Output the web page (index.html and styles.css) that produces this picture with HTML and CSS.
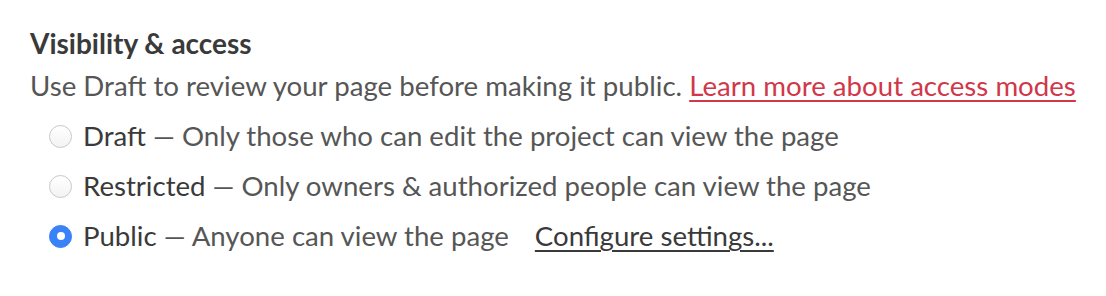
FILE: index.html
```html
<!DOCTYPE html>
<html>
<head>
<meta charset="utf-8">
<link rel="stylesheet" href="styles.css">
</head>
<body>
<section class="panel">
  <h2 class="title">Visibility &amp; access</h2>
  <p class="intro">Use Draft to review your page before making it public. <a class="link" href="#">Learn more about access modes</a></p>
  <ul class="options">
    <li class="option">
      <span class="radio"></span>
      <span class="label"><span class="name">Draft</span> — Only those who can edit the project can view the page</span>
    </li>
    <li class="option">
      <span class="radio"></span>
      <span class="label"><span class="name">Restricted</span> — Only owners &amp; authorized people can view the page</span>
    </li>
    <li class="option">
      <span class="radio checked"></span>
      <span class="label"><span class="name">Public</span> — Anyone can view the page</span>
      <a class="configure" href="#">Configure settings...</a>
    </li>
  </ul>
</section>
</body>
</html>
```

FILE: styles.css
```css
html, body {
  margin: 0;
  padding: 0;
  background: #ffffff;
}
body {
  font-family: Lato, "Open Sans", sans-serif;
  color: #555555;
}
.panel {
  padding: 26px 30px 0 30px;
}
.title {
  margin: 0;
  font-size: 28px;
  font-weight: 700;
  color: #3a3a3a;
  line-height: 34px;
}
.intro {
  margin: 9px 0 0 0;
  font-size: 27.65px;
  line-height: 34px;
  color: #565656;
}
.link {
  color: #d0384a;
  text-decoration: underline;
  text-underline-offset: 4px;
  text-decoration-thickness: 2px;
}
.options {
  list-style: none;
  margin: 16px 0 0 0;
  padding: 0 0 0 19px;
  display: flex;
  flex-direction: column;
  gap: 16px;
}
.option {
  display: flex;
  align-items: center;
  font-size: 27.6px;
  line-height: 34px;
  color: #565656;
}
.radio {
  width: 21px;
  height: 21px;
  border: 1px solid #c8c8c8;
  border-radius: 50%;
  background: linear-gradient(#ffffff, #f3f3f3);
  margin-right: 11px;
  flex: none;
  box-sizing: content-box;
}
.radio.checked {
  border-color: #3a82f7;
  background: #3a82f7;
  position: relative;
}
.radio.checked::after {
  content: "";
  position: absolute;
  left: 6.5px;
  top: 6.5px;
  width: 8px;
  height: 8px;
  border-radius: 50%;
  background: #ffffff;
}
.name {
  color: #3a3a3a;
}
.configure {
  margin-left: 26px;
  color: #3a3a3a;
  text-decoration: underline;
  text-underline-offset: 4px;
  text-decoration-thickness: 2px;
}
```
